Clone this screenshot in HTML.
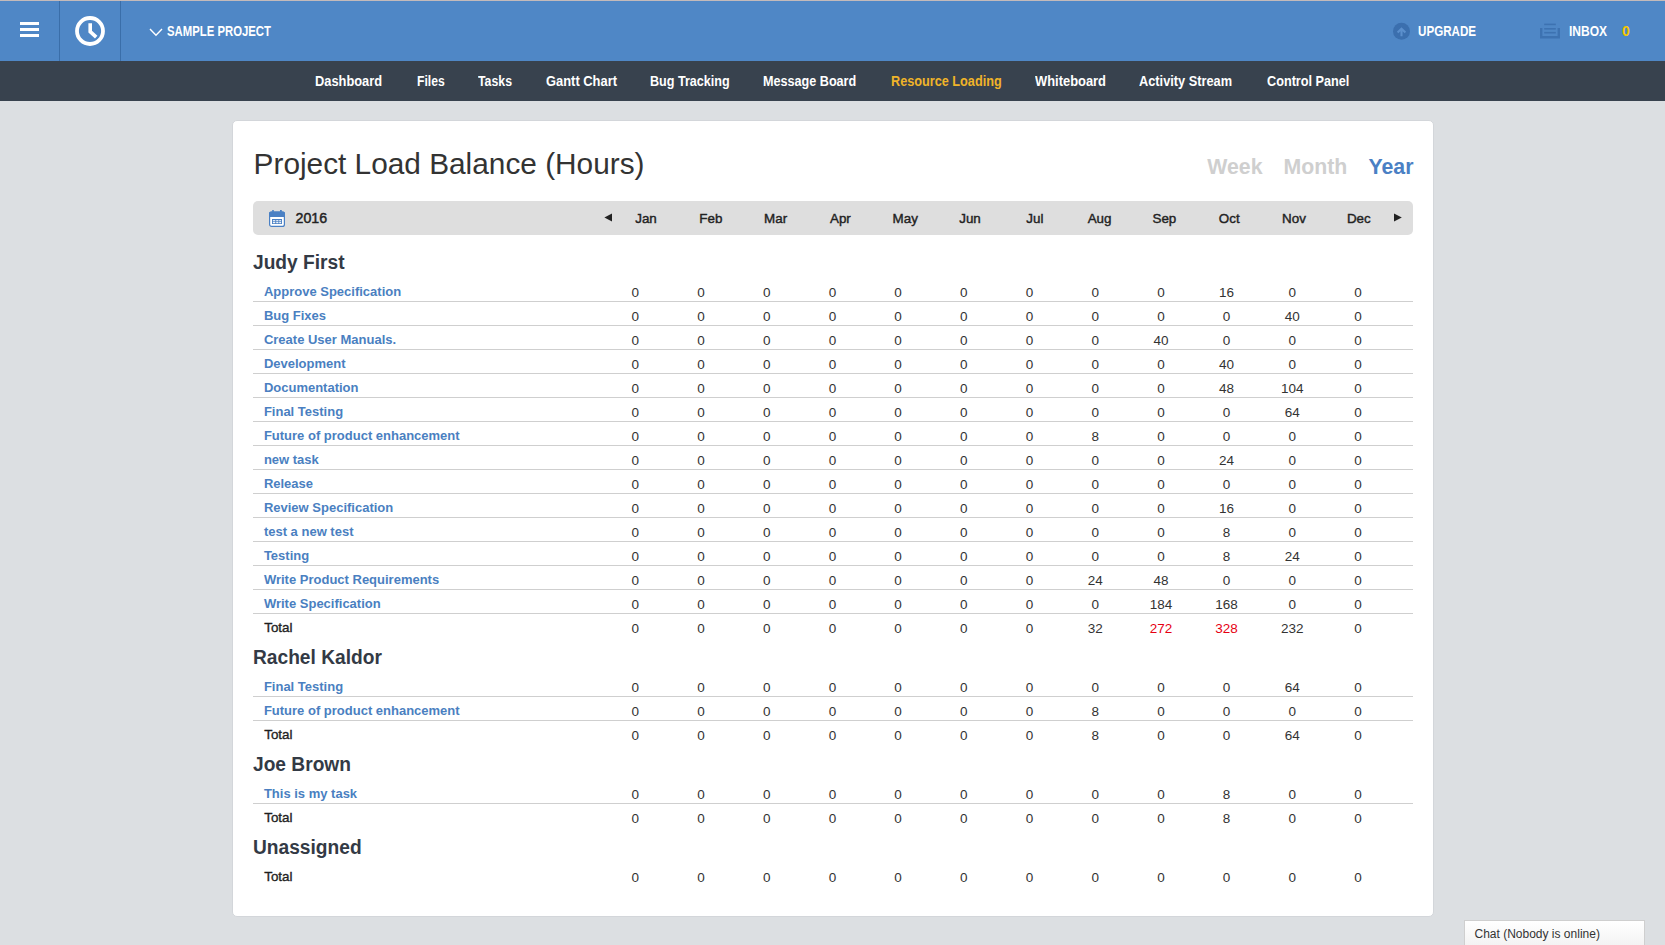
<!DOCTYPE html><html><head><meta charset="utf-8"><style>
html,body{margin:0;padding:0;}
body{width:1665px;height:945px;position:relative;overflow:hidden;background:#dcdfe2;font-family:"Liberation Sans",sans-serif;}
.t{position:absolute;white-space:nowrap;}
.abs{position:absolute;}
</style></head><body>
<div class="abs" style="left:0;top:0;width:1665px;height:1px;background:#c4baba"></div>
<div class="abs" style="left:0;top:1px;width:1665px;height:60px;background:#4f87c6"></div>
<div class="abs" style="left:59px;top:1px;width:1px;height:60px;background:#3a6ea9"></div>
<div class="abs" style="left:120px;top:1px;width:1px;height:60px;background:#3a6ea9"></div>
<div class="abs" style="left:20px;top:22px;width:19px;height:3px;background:#fff"></div>
<div class="abs" style="left:20px;top:28px;width:19px;height:3px;background:#fff"></div>
<div class="abs" style="left:20px;top:34px;width:19px;height:3px;background:#fff"></div>
<svg class="abs" style="left:70px;top:11px" width="40" height="40" viewBox="0 0 40 40"><circle cx="20" cy="20" r="13" fill="none" stroke="#fff" stroke-width="3.8"/><path d="M20.2 12.3 V20.6 L26.2 26.1" fill="none" stroke="#fff" stroke-width="3.6"/></svg>
<svg class="abs" style="left:147.6px;top:26px" width="16" height="12" viewBox="0 0 16 12"><path d="M2 3 L8 9.3 L14 3" fill="none" stroke="#fff" stroke-width="1.4"/></svg>
<div class="t" style="left:167.30px;top:24.15px;font-size:14px;line-height:14px;color:#fff;font-weight:bold;transform:scaleX(0.81);transform-origin:0 0;">SAMPLE PROJECT</div>
<svg class="abs" style="left:1392px;top:22px" width="19" height="19" viewBox="0 0 19 19"><circle cx="9.5" cy="9.3" r="8.5" fill="#3b6fae"/><path d="M9.5 14.2 V7.2 M5.6 10.6 L9.5 6.7 L13.4 10.6" fill="none" stroke="#5b8fcc" stroke-width="2.1"/></svg>
<div class="t" style="left:1418.30px;top:24.15px;font-size:14px;line-height:14px;color:#fff;font-weight:bold;transform:scaleX(0.83);transform-origin:0 0;">UPGRADE</div>
<svg class="abs" style="left:1540px;top:23px" width="20" height="16" viewBox="0 0 20 16"><path d="M1.2 5 V14.2 H18.8 V5" fill="none" stroke="#3d72b1" stroke-width="2.4"/><rect x="4.2" y="0.6" width="11.6" height="1.6" fill="#3d72b1"/><rect x="4.2" y="5" width="11.6" height="1.6" fill="#3d72b1"/><rect x="4.2" y="8.9" width="11.6" height="1.6" fill="#3d72b1"/></svg>
<div class="t" style="left:1569.00px;top:24.15px;font-size:14px;line-height:14px;color:#fff;font-weight:bold;transform:scaleX(0.86);transform-origin:0 0;">INBOX</div>
<div class="t" style="left:1622.00px;top:24.15px;font-size:14px;line-height:14px;color:#f7c600;font-weight:bold;">0</div>
<div class="abs" style="left:0;top:61px;width:1665px;height:40px;background:#38424e"></div>
<div class="t" style="left:315.30px;top:74.15px;font-size:14px;line-height:14px;color:#fff;font-weight:bold;transform:scaleX(0.917);transform-origin:0 0;">Dashboard</div>
<div class="t" style="left:416.70px;top:74.15px;font-size:14px;line-height:14px;color:#fff;font-weight:bold;transform:scaleX(0.868);transform-origin:0 0;">Files</div>
<div class="t" style="left:478.00px;top:74.15px;font-size:14px;line-height:14px;color:#fff;font-weight:bold;transform:scaleX(0.879);transform-origin:0 0;">Tasks</div>
<div class="t" style="left:545.90px;top:74.15px;font-size:14px;line-height:14px;color:#fff;font-weight:bold;transform:scaleX(0.922);transform-origin:0 0;">Gantt Chart</div>
<div class="t" style="left:650.00px;top:74.15px;font-size:14px;line-height:14px;color:#fff;font-weight:bold;transform:scaleX(0.899);transform-origin:0 0;">Bug Tracking</div>
<div class="t" style="left:763.40px;top:74.15px;font-size:14px;line-height:14px;color:#fff;font-weight:bold;transform:scaleX(0.901);transform-origin:0 0;">Message Board</div>
<div class="t" style="left:891.00px;top:74.15px;font-size:14px;line-height:14px;color:#f0b429;font-weight:bold;transform:scaleX(0.906);transform-origin:0 0;">Resource Loading</div>
<div class="t" style="left:1034.80px;top:74.15px;font-size:14px;line-height:14px;color:#fff;font-weight:bold;transform:scaleX(0.922);transform-origin:0 0;">Whiteboard</div>
<div class="t" style="left:1139.40px;top:74.15px;font-size:14px;line-height:14px;color:#fff;font-weight:bold;transform:scaleX(0.913);transform-origin:0 0;">Activity Stream</div>
<div class="t" style="left:1266.90px;top:74.15px;font-size:14px;line-height:14px;color:#fff;font-weight:bold;transform:scaleX(0.905);transform-origin:0 0;">Control Panel</div>
<div class="abs" style="left:232px;top:120px;width:1200px;height:795px;background:#fff;border:1px solid #d3d6da;border-radius:5px"></div>
<div class="t" style="left:253.60px;top:149.47px;font-size:29.8px;line-height:29.8px;color:#333;font-weight:normal;">Project Load Balance (Hours)</div>
<div class="t" style="left:1207.30px;top:157.37px;font-size:21.3px;line-height:21.3px;color:#cfcfcf;font-weight:bold;">Week</div>
<div class="t" style="left:1283.50px;top:157.37px;font-size:21.3px;line-height:21.3px;color:#cfcfcf;font-weight:bold;">Month</div>
<div class="t" style="left:1368.50px;top:157.37px;font-size:21.3px;line-height:21.3px;color:#4a80c4;font-weight:bold;">Year</div>
<div class="abs" style="left:253px;top:201px;width:1160px;height:34px;background:#dedede;border-radius:5px"></div>
<svg class="abs" style="left:269px;top:210px" width="16" height="17" viewBox="0 0 16 17"><rect x="0.6" y="2.1" width="14.8" height="14.3" rx="2" fill="#fff" stroke="#4a80c4" stroke-width="1.2"/><path d="M0 4.1 a2 2 0 0 1 2 -2.6 h12 a2 2 0 0 1 2 2.6 v3 h-16 z" fill="#4a80c4"/><rect x="3.2" y="0" width="1.6" height="2.6" fill="#4a80c4"/><rect x="11" y="0" width="1.8" height="2.6" fill="#4a80c4"/><rect x="3" y="9" width="10" height="5" fill="#4a80c4"/><rect x="3.9" y="10.2" width="2.4" height="1.1" fill="#fff"/><rect x="7.2" y="10.2" width="2.2" height="1.1" fill="#fff"/><rect x="10.2" y="10.2" width="1.9" height="1.1" fill="#fff"/><rect x="3.9" y="12.1" width="2.4" height="1.1" fill="#fff"/><rect x="7.2" y="12.1" width="2.2" height="1.1" fill="#fff"/><rect x="10.2" y="12.1" width="1.9" height="1.1" fill="#fff"/></svg>
<div class="t" style="left:295.50px;top:211.28px;font-size:14.2px;line-height:14.2px;color:#222;font-weight:normal;-webkit-text-stroke:0.45px #222;">2016</div>
<svg class="abs" style="left:603px;top:212px" width="10" height="11" viewBox="0 0 10 11"><path d="M1.4 5.5 L9 1.5 V9.5 Z" fill="#222"/></svg>
<svg class="abs" style="left:1393px;top:212px" width="10" height="11" viewBox="0 0 10 11"><path d="M8.8 5.5 L1 1.5 V9.5 Z" fill="#222"/></svg>
<div class="t" style="left:546.00px;width:200px;text-align:center;top:212.16px;font-size:13.4px;line-height:13.4px;color:#222;font-weight:normal;-webkit-text-stroke:0.4px #222;">Jan</div>
<div class="t" style="left:610.80px;width:200px;text-align:center;top:212.16px;font-size:13.4px;line-height:13.4px;color:#222;font-weight:normal;-webkit-text-stroke:0.4px #222;">Feb</div>
<div class="t" style="left:675.60px;width:200px;text-align:center;top:212.16px;font-size:13.4px;line-height:13.4px;color:#222;font-weight:normal;-webkit-text-stroke:0.4px #222;">Mar</div>
<div class="t" style="left:740.40px;width:200px;text-align:center;top:212.16px;font-size:13.4px;line-height:13.4px;color:#222;font-weight:normal;-webkit-text-stroke:0.4px #222;">Apr</div>
<div class="t" style="left:805.20px;width:200px;text-align:center;top:212.16px;font-size:13.4px;line-height:13.4px;color:#222;font-weight:normal;-webkit-text-stroke:0.4px #222;">May</div>
<div class="t" style="left:870.00px;width:200px;text-align:center;top:212.16px;font-size:13.4px;line-height:13.4px;color:#222;font-weight:normal;-webkit-text-stroke:0.4px #222;">Jun</div>
<div class="t" style="left:934.80px;width:200px;text-align:center;top:212.16px;font-size:13.4px;line-height:13.4px;color:#222;font-weight:normal;-webkit-text-stroke:0.4px #222;">Jul</div>
<div class="t" style="left:999.60px;width:200px;text-align:center;top:212.16px;font-size:13.4px;line-height:13.4px;color:#222;font-weight:normal;-webkit-text-stroke:0.4px #222;">Aug</div>
<div class="t" style="left:1064.40px;width:200px;text-align:center;top:212.16px;font-size:13.4px;line-height:13.4px;color:#222;font-weight:normal;-webkit-text-stroke:0.4px #222;">Sep</div>
<div class="t" style="left:1129.20px;width:200px;text-align:center;top:212.16px;font-size:13.4px;line-height:13.4px;color:#222;font-weight:normal;-webkit-text-stroke:0.4px #222;">Oct</div>
<div class="t" style="left:1194.00px;width:200px;text-align:center;top:212.16px;font-size:13.4px;line-height:13.4px;color:#222;font-weight:normal;-webkit-text-stroke:0.4px #222;">Nov</div>
<div class="t" style="left:1258.80px;width:200px;text-align:center;top:212.16px;font-size:13.4px;line-height:13.4px;color:#222;font-weight:normal;-webkit-text-stroke:0.4px #222;">Dec</div>
<div class="t" style="left:252.80px;top:252.07px;font-size:20px;line-height:20px;color:#333a45;font-weight:bold;transform:scaleX(0.958);transform-origin:0 0;">Judy First</div>
<div class="t" style="left:263.90px;top:285.40px;font-size:13px;line-height:13px;color:#4a7fc1;font-weight:bold;">Approve Specification</div>
<div class="t" style="left:535.30px;width:200px;text-align:center;top:285.77px;font-size:13.5px;line-height:13.5px;color:#333;font-weight:normal;">0</div>
<div class="t" style="left:601.00px;width:200px;text-align:center;top:285.77px;font-size:13.5px;line-height:13.5px;color:#333;font-weight:normal;">0</div>
<div class="t" style="left:666.70px;width:200px;text-align:center;top:285.77px;font-size:13.5px;line-height:13.5px;color:#333;font-weight:normal;">0</div>
<div class="t" style="left:732.40px;width:200px;text-align:center;top:285.77px;font-size:13.5px;line-height:13.5px;color:#333;font-weight:normal;">0</div>
<div class="t" style="left:798.10px;width:200px;text-align:center;top:285.77px;font-size:13.5px;line-height:13.5px;color:#333;font-weight:normal;">0</div>
<div class="t" style="left:863.80px;width:200px;text-align:center;top:285.77px;font-size:13.5px;line-height:13.5px;color:#333;font-weight:normal;">0</div>
<div class="t" style="left:929.50px;width:200px;text-align:center;top:285.77px;font-size:13.5px;line-height:13.5px;color:#333;font-weight:normal;">0</div>
<div class="t" style="left:995.20px;width:200px;text-align:center;top:285.77px;font-size:13.5px;line-height:13.5px;color:#333;font-weight:normal;">0</div>
<div class="t" style="left:1060.90px;width:200px;text-align:center;top:285.77px;font-size:13.5px;line-height:13.5px;color:#333;font-weight:normal;">0</div>
<div class="t" style="left:1126.60px;width:200px;text-align:center;top:285.77px;font-size:13.5px;line-height:13.5px;color:#333;font-weight:normal;">16</div>
<div class="t" style="left:1192.30px;width:200px;text-align:center;top:285.77px;font-size:13.5px;line-height:13.5px;color:#333;font-weight:normal;">0</div>
<div class="t" style="left:1258.00px;width:200px;text-align:center;top:285.77px;font-size:13.5px;line-height:13.5px;color:#333;font-weight:normal;">0</div>
<div class="abs" style="left:253px;top:301px;width:1160px;height:1px;background:#cfcfcf"></div>
<div class="t" style="left:263.90px;top:309.40px;font-size:13px;line-height:13px;color:#4a7fc1;font-weight:bold;">Bug Fixes</div>
<div class="t" style="left:535.30px;width:200px;text-align:center;top:309.77px;font-size:13.5px;line-height:13.5px;color:#333;font-weight:normal;">0</div>
<div class="t" style="left:601.00px;width:200px;text-align:center;top:309.77px;font-size:13.5px;line-height:13.5px;color:#333;font-weight:normal;">0</div>
<div class="t" style="left:666.70px;width:200px;text-align:center;top:309.77px;font-size:13.5px;line-height:13.5px;color:#333;font-weight:normal;">0</div>
<div class="t" style="left:732.40px;width:200px;text-align:center;top:309.77px;font-size:13.5px;line-height:13.5px;color:#333;font-weight:normal;">0</div>
<div class="t" style="left:798.10px;width:200px;text-align:center;top:309.77px;font-size:13.5px;line-height:13.5px;color:#333;font-weight:normal;">0</div>
<div class="t" style="left:863.80px;width:200px;text-align:center;top:309.77px;font-size:13.5px;line-height:13.5px;color:#333;font-weight:normal;">0</div>
<div class="t" style="left:929.50px;width:200px;text-align:center;top:309.77px;font-size:13.5px;line-height:13.5px;color:#333;font-weight:normal;">0</div>
<div class="t" style="left:995.20px;width:200px;text-align:center;top:309.77px;font-size:13.5px;line-height:13.5px;color:#333;font-weight:normal;">0</div>
<div class="t" style="left:1060.90px;width:200px;text-align:center;top:309.77px;font-size:13.5px;line-height:13.5px;color:#333;font-weight:normal;">0</div>
<div class="t" style="left:1126.60px;width:200px;text-align:center;top:309.77px;font-size:13.5px;line-height:13.5px;color:#333;font-weight:normal;">0</div>
<div class="t" style="left:1192.30px;width:200px;text-align:center;top:309.77px;font-size:13.5px;line-height:13.5px;color:#333;font-weight:normal;">40</div>
<div class="t" style="left:1258.00px;width:200px;text-align:center;top:309.77px;font-size:13.5px;line-height:13.5px;color:#333;font-weight:normal;">0</div>
<div class="abs" style="left:253px;top:325px;width:1160px;height:1px;background:#cfcfcf"></div>
<div class="t" style="left:263.90px;top:333.40px;font-size:13px;line-height:13px;color:#4a7fc1;font-weight:bold;">Create User Manuals.</div>
<div class="t" style="left:535.30px;width:200px;text-align:center;top:333.77px;font-size:13.5px;line-height:13.5px;color:#333;font-weight:normal;">0</div>
<div class="t" style="left:601.00px;width:200px;text-align:center;top:333.77px;font-size:13.5px;line-height:13.5px;color:#333;font-weight:normal;">0</div>
<div class="t" style="left:666.70px;width:200px;text-align:center;top:333.77px;font-size:13.5px;line-height:13.5px;color:#333;font-weight:normal;">0</div>
<div class="t" style="left:732.40px;width:200px;text-align:center;top:333.77px;font-size:13.5px;line-height:13.5px;color:#333;font-weight:normal;">0</div>
<div class="t" style="left:798.10px;width:200px;text-align:center;top:333.77px;font-size:13.5px;line-height:13.5px;color:#333;font-weight:normal;">0</div>
<div class="t" style="left:863.80px;width:200px;text-align:center;top:333.77px;font-size:13.5px;line-height:13.5px;color:#333;font-weight:normal;">0</div>
<div class="t" style="left:929.50px;width:200px;text-align:center;top:333.77px;font-size:13.5px;line-height:13.5px;color:#333;font-weight:normal;">0</div>
<div class="t" style="left:995.20px;width:200px;text-align:center;top:333.77px;font-size:13.5px;line-height:13.5px;color:#333;font-weight:normal;">0</div>
<div class="t" style="left:1060.90px;width:200px;text-align:center;top:333.77px;font-size:13.5px;line-height:13.5px;color:#333;font-weight:normal;">40</div>
<div class="t" style="left:1126.60px;width:200px;text-align:center;top:333.77px;font-size:13.5px;line-height:13.5px;color:#333;font-weight:normal;">0</div>
<div class="t" style="left:1192.30px;width:200px;text-align:center;top:333.77px;font-size:13.5px;line-height:13.5px;color:#333;font-weight:normal;">0</div>
<div class="t" style="left:1258.00px;width:200px;text-align:center;top:333.77px;font-size:13.5px;line-height:13.5px;color:#333;font-weight:normal;">0</div>
<div class="abs" style="left:253px;top:349px;width:1160px;height:1px;background:#cfcfcf"></div>
<div class="t" style="left:263.90px;top:357.40px;font-size:13px;line-height:13px;color:#4a7fc1;font-weight:bold;">Development</div>
<div class="t" style="left:535.30px;width:200px;text-align:center;top:357.77px;font-size:13.5px;line-height:13.5px;color:#333;font-weight:normal;">0</div>
<div class="t" style="left:601.00px;width:200px;text-align:center;top:357.77px;font-size:13.5px;line-height:13.5px;color:#333;font-weight:normal;">0</div>
<div class="t" style="left:666.70px;width:200px;text-align:center;top:357.77px;font-size:13.5px;line-height:13.5px;color:#333;font-weight:normal;">0</div>
<div class="t" style="left:732.40px;width:200px;text-align:center;top:357.77px;font-size:13.5px;line-height:13.5px;color:#333;font-weight:normal;">0</div>
<div class="t" style="left:798.10px;width:200px;text-align:center;top:357.77px;font-size:13.5px;line-height:13.5px;color:#333;font-weight:normal;">0</div>
<div class="t" style="left:863.80px;width:200px;text-align:center;top:357.77px;font-size:13.5px;line-height:13.5px;color:#333;font-weight:normal;">0</div>
<div class="t" style="left:929.50px;width:200px;text-align:center;top:357.77px;font-size:13.5px;line-height:13.5px;color:#333;font-weight:normal;">0</div>
<div class="t" style="left:995.20px;width:200px;text-align:center;top:357.77px;font-size:13.5px;line-height:13.5px;color:#333;font-weight:normal;">0</div>
<div class="t" style="left:1060.90px;width:200px;text-align:center;top:357.77px;font-size:13.5px;line-height:13.5px;color:#333;font-weight:normal;">0</div>
<div class="t" style="left:1126.60px;width:200px;text-align:center;top:357.77px;font-size:13.5px;line-height:13.5px;color:#333;font-weight:normal;">40</div>
<div class="t" style="left:1192.30px;width:200px;text-align:center;top:357.77px;font-size:13.5px;line-height:13.5px;color:#333;font-weight:normal;">0</div>
<div class="t" style="left:1258.00px;width:200px;text-align:center;top:357.77px;font-size:13.5px;line-height:13.5px;color:#333;font-weight:normal;">0</div>
<div class="abs" style="left:253px;top:373px;width:1160px;height:1px;background:#cfcfcf"></div>
<div class="t" style="left:263.90px;top:381.40px;font-size:13px;line-height:13px;color:#4a7fc1;font-weight:bold;">Documentation</div>
<div class="t" style="left:535.30px;width:200px;text-align:center;top:381.77px;font-size:13.5px;line-height:13.5px;color:#333;font-weight:normal;">0</div>
<div class="t" style="left:601.00px;width:200px;text-align:center;top:381.77px;font-size:13.5px;line-height:13.5px;color:#333;font-weight:normal;">0</div>
<div class="t" style="left:666.70px;width:200px;text-align:center;top:381.77px;font-size:13.5px;line-height:13.5px;color:#333;font-weight:normal;">0</div>
<div class="t" style="left:732.40px;width:200px;text-align:center;top:381.77px;font-size:13.5px;line-height:13.5px;color:#333;font-weight:normal;">0</div>
<div class="t" style="left:798.10px;width:200px;text-align:center;top:381.77px;font-size:13.5px;line-height:13.5px;color:#333;font-weight:normal;">0</div>
<div class="t" style="left:863.80px;width:200px;text-align:center;top:381.77px;font-size:13.5px;line-height:13.5px;color:#333;font-weight:normal;">0</div>
<div class="t" style="left:929.50px;width:200px;text-align:center;top:381.77px;font-size:13.5px;line-height:13.5px;color:#333;font-weight:normal;">0</div>
<div class="t" style="left:995.20px;width:200px;text-align:center;top:381.77px;font-size:13.5px;line-height:13.5px;color:#333;font-weight:normal;">0</div>
<div class="t" style="left:1060.90px;width:200px;text-align:center;top:381.77px;font-size:13.5px;line-height:13.5px;color:#333;font-weight:normal;">0</div>
<div class="t" style="left:1126.60px;width:200px;text-align:center;top:381.77px;font-size:13.5px;line-height:13.5px;color:#333;font-weight:normal;">48</div>
<div class="t" style="left:1192.30px;width:200px;text-align:center;top:381.77px;font-size:13.5px;line-height:13.5px;color:#333;font-weight:normal;">104</div>
<div class="t" style="left:1258.00px;width:200px;text-align:center;top:381.77px;font-size:13.5px;line-height:13.5px;color:#333;font-weight:normal;">0</div>
<div class="abs" style="left:253px;top:397px;width:1160px;height:1px;background:#cfcfcf"></div>
<div class="t" style="left:263.90px;top:405.40px;font-size:13px;line-height:13px;color:#4a7fc1;font-weight:bold;">Final Testing</div>
<div class="t" style="left:535.30px;width:200px;text-align:center;top:405.77px;font-size:13.5px;line-height:13.5px;color:#333;font-weight:normal;">0</div>
<div class="t" style="left:601.00px;width:200px;text-align:center;top:405.77px;font-size:13.5px;line-height:13.5px;color:#333;font-weight:normal;">0</div>
<div class="t" style="left:666.70px;width:200px;text-align:center;top:405.77px;font-size:13.5px;line-height:13.5px;color:#333;font-weight:normal;">0</div>
<div class="t" style="left:732.40px;width:200px;text-align:center;top:405.77px;font-size:13.5px;line-height:13.5px;color:#333;font-weight:normal;">0</div>
<div class="t" style="left:798.10px;width:200px;text-align:center;top:405.77px;font-size:13.5px;line-height:13.5px;color:#333;font-weight:normal;">0</div>
<div class="t" style="left:863.80px;width:200px;text-align:center;top:405.77px;font-size:13.5px;line-height:13.5px;color:#333;font-weight:normal;">0</div>
<div class="t" style="left:929.50px;width:200px;text-align:center;top:405.77px;font-size:13.5px;line-height:13.5px;color:#333;font-weight:normal;">0</div>
<div class="t" style="left:995.20px;width:200px;text-align:center;top:405.77px;font-size:13.5px;line-height:13.5px;color:#333;font-weight:normal;">0</div>
<div class="t" style="left:1060.90px;width:200px;text-align:center;top:405.77px;font-size:13.5px;line-height:13.5px;color:#333;font-weight:normal;">0</div>
<div class="t" style="left:1126.60px;width:200px;text-align:center;top:405.77px;font-size:13.5px;line-height:13.5px;color:#333;font-weight:normal;">0</div>
<div class="t" style="left:1192.30px;width:200px;text-align:center;top:405.77px;font-size:13.5px;line-height:13.5px;color:#333;font-weight:normal;">64</div>
<div class="t" style="left:1258.00px;width:200px;text-align:center;top:405.77px;font-size:13.5px;line-height:13.5px;color:#333;font-weight:normal;">0</div>
<div class="abs" style="left:253px;top:421px;width:1160px;height:1px;background:#cfcfcf"></div>
<div class="t" style="left:263.90px;top:429.40px;font-size:13px;line-height:13px;color:#4a7fc1;font-weight:bold;">Future of product enhancement</div>
<div class="t" style="left:535.30px;width:200px;text-align:center;top:429.77px;font-size:13.5px;line-height:13.5px;color:#333;font-weight:normal;">0</div>
<div class="t" style="left:601.00px;width:200px;text-align:center;top:429.77px;font-size:13.5px;line-height:13.5px;color:#333;font-weight:normal;">0</div>
<div class="t" style="left:666.70px;width:200px;text-align:center;top:429.77px;font-size:13.5px;line-height:13.5px;color:#333;font-weight:normal;">0</div>
<div class="t" style="left:732.40px;width:200px;text-align:center;top:429.77px;font-size:13.5px;line-height:13.5px;color:#333;font-weight:normal;">0</div>
<div class="t" style="left:798.10px;width:200px;text-align:center;top:429.77px;font-size:13.5px;line-height:13.5px;color:#333;font-weight:normal;">0</div>
<div class="t" style="left:863.80px;width:200px;text-align:center;top:429.77px;font-size:13.5px;line-height:13.5px;color:#333;font-weight:normal;">0</div>
<div class="t" style="left:929.50px;width:200px;text-align:center;top:429.77px;font-size:13.5px;line-height:13.5px;color:#333;font-weight:normal;">0</div>
<div class="t" style="left:995.20px;width:200px;text-align:center;top:429.77px;font-size:13.5px;line-height:13.5px;color:#333;font-weight:normal;">8</div>
<div class="t" style="left:1060.90px;width:200px;text-align:center;top:429.77px;font-size:13.5px;line-height:13.5px;color:#333;font-weight:normal;">0</div>
<div class="t" style="left:1126.60px;width:200px;text-align:center;top:429.77px;font-size:13.5px;line-height:13.5px;color:#333;font-weight:normal;">0</div>
<div class="t" style="left:1192.30px;width:200px;text-align:center;top:429.77px;font-size:13.5px;line-height:13.5px;color:#333;font-weight:normal;">0</div>
<div class="t" style="left:1258.00px;width:200px;text-align:center;top:429.77px;font-size:13.5px;line-height:13.5px;color:#333;font-weight:normal;">0</div>
<div class="abs" style="left:253px;top:445px;width:1160px;height:1px;background:#cfcfcf"></div>
<div class="t" style="left:263.90px;top:453.40px;font-size:13px;line-height:13px;color:#4a7fc1;font-weight:bold;">new task</div>
<div class="t" style="left:535.30px;width:200px;text-align:center;top:453.77px;font-size:13.5px;line-height:13.5px;color:#333;font-weight:normal;">0</div>
<div class="t" style="left:601.00px;width:200px;text-align:center;top:453.77px;font-size:13.5px;line-height:13.5px;color:#333;font-weight:normal;">0</div>
<div class="t" style="left:666.70px;width:200px;text-align:center;top:453.77px;font-size:13.5px;line-height:13.5px;color:#333;font-weight:normal;">0</div>
<div class="t" style="left:732.40px;width:200px;text-align:center;top:453.77px;font-size:13.5px;line-height:13.5px;color:#333;font-weight:normal;">0</div>
<div class="t" style="left:798.10px;width:200px;text-align:center;top:453.77px;font-size:13.5px;line-height:13.5px;color:#333;font-weight:normal;">0</div>
<div class="t" style="left:863.80px;width:200px;text-align:center;top:453.77px;font-size:13.5px;line-height:13.5px;color:#333;font-weight:normal;">0</div>
<div class="t" style="left:929.50px;width:200px;text-align:center;top:453.77px;font-size:13.5px;line-height:13.5px;color:#333;font-weight:normal;">0</div>
<div class="t" style="left:995.20px;width:200px;text-align:center;top:453.77px;font-size:13.5px;line-height:13.5px;color:#333;font-weight:normal;">0</div>
<div class="t" style="left:1060.90px;width:200px;text-align:center;top:453.77px;font-size:13.5px;line-height:13.5px;color:#333;font-weight:normal;">0</div>
<div class="t" style="left:1126.60px;width:200px;text-align:center;top:453.77px;font-size:13.5px;line-height:13.5px;color:#333;font-weight:normal;">24</div>
<div class="t" style="left:1192.30px;width:200px;text-align:center;top:453.77px;font-size:13.5px;line-height:13.5px;color:#333;font-weight:normal;">0</div>
<div class="t" style="left:1258.00px;width:200px;text-align:center;top:453.77px;font-size:13.5px;line-height:13.5px;color:#333;font-weight:normal;">0</div>
<div class="abs" style="left:253px;top:469px;width:1160px;height:1px;background:#cfcfcf"></div>
<div class="t" style="left:263.90px;top:477.40px;font-size:13px;line-height:13px;color:#4a7fc1;font-weight:bold;">Release</div>
<div class="t" style="left:535.30px;width:200px;text-align:center;top:477.77px;font-size:13.5px;line-height:13.5px;color:#333;font-weight:normal;">0</div>
<div class="t" style="left:601.00px;width:200px;text-align:center;top:477.77px;font-size:13.5px;line-height:13.5px;color:#333;font-weight:normal;">0</div>
<div class="t" style="left:666.70px;width:200px;text-align:center;top:477.77px;font-size:13.5px;line-height:13.5px;color:#333;font-weight:normal;">0</div>
<div class="t" style="left:732.40px;width:200px;text-align:center;top:477.77px;font-size:13.5px;line-height:13.5px;color:#333;font-weight:normal;">0</div>
<div class="t" style="left:798.10px;width:200px;text-align:center;top:477.77px;font-size:13.5px;line-height:13.5px;color:#333;font-weight:normal;">0</div>
<div class="t" style="left:863.80px;width:200px;text-align:center;top:477.77px;font-size:13.5px;line-height:13.5px;color:#333;font-weight:normal;">0</div>
<div class="t" style="left:929.50px;width:200px;text-align:center;top:477.77px;font-size:13.5px;line-height:13.5px;color:#333;font-weight:normal;">0</div>
<div class="t" style="left:995.20px;width:200px;text-align:center;top:477.77px;font-size:13.5px;line-height:13.5px;color:#333;font-weight:normal;">0</div>
<div class="t" style="left:1060.90px;width:200px;text-align:center;top:477.77px;font-size:13.5px;line-height:13.5px;color:#333;font-weight:normal;">0</div>
<div class="t" style="left:1126.60px;width:200px;text-align:center;top:477.77px;font-size:13.5px;line-height:13.5px;color:#333;font-weight:normal;">0</div>
<div class="t" style="left:1192.30px;width:200px;text-align:center;top:477.77px;font-size:13.5px;line-height:13.5px;color:#333;font-weight:normal;">0</div>
<div class="t" style="left:1258.00px;width:200px;text-align:center;top:477.77px;font-size:13.5px;line-height:13.5px;color:#333;font-weight:normal;">0</div>
<div class="abs" style="left:253px;top:493px;width:1160px;height:1px;background:#cfcfcf"></div>
<div class="t" style="left:263.90px;top:501.40px;font-size:13px;line-height:13px;color:#4a7fc1;font-weight:bold;">Review Specification</div>
<div class="t" style="left:535.30px;width:200px;text-align:center;top:501.77px;font-size:13.5px;line-height:13.5px;color:#333;font-weight:normal;">0</div>
<div class="t" style="left:601.00px;width:200px;text-align:center;top:501.77px;font-size:13.5px;line-height:13.5px;color:#333;font-weight:normal;">0</div>
<div class="t" style="left:666.70px;width:200px;text-align:center;top:501.77px;font-size:13.5px;line-height:13.5px;color:#333;font-weight:normal;">0</div>
<div class="t" style="left:732.40px;width:200px;text-align:center;top:501.77px;font-size:13.5px;line-height:13.5px;color:#333;font-weight:normal;">0</div>
<div class="t" style="left:798.10px;width:200px;text-align:center;top:501.77px;font-size:13.5px;line-height:13.5px;color:#333;font-weight:normal;">0</div>
<div class="t" style="left:863.80px;width:200px;text-align:center;top:501.77px;font-size:13.5px;line-height:13.5px;color:#333;font-weight:normal;">0</div>
<div class="t" style="left:929.50px;width:200px;text-align:center;top:501.77px;font-size:13.5px;line-height:13.5px;color:#333;font-weight:normal;">0</div>
<div class="t" style="left:995.20px;width:200px;text-align:center;top:501.77px;font-size:13.5px;line-height:13.5px;color:#333;font-weight:normal;">0</div>
<div class="t" style="left:1060.90px;width:200px;text-align:center;top:501.77px;font-size:13.5px;line-height:13.5px;color:#333;font-weight:normal;">0</div>
<div class="t" style="left:1126.60px;width:200px;text-align:center;top:501.77px;font-size:13.5px;line-height:13.5px;color:#333;font-weight:normal;">16</div>
<div class="t" style="left:1192.30px;width:200px;text-align:center;top:501.77px;font-size:13.5px;line-height:13.5px;color:#333;font-weight:normal;">0</div>
<div class="t" style="left:1258.00px;width:200px;text-align:center;top:501.77px;font-size:13.5px;line-height:13.5px;color:#333;font-weight:normal;">0</div>
<div class="abs" style="left:253px;top:517px;width:1160px;height:1px;background:#cfcfcf"></div>
<div class="t" style="left:263.90px;top:525.40px;font-size:13px;line-height:13px;color:#4a7fc1;font-weight:bold;">test a new test</div>
<div class="t" style="left:535.30px;width:200px;text-align:center;top:525.77px;font-size:13.5px;line-height:13.5px;color:#333;font-weight:normal;">0</div>
<div class="t" style="left:601.00px;width:200px;text-align:center;top:525.77px;font-size:13.5px;line-height:13.5px;color:#333;font-weight:normal;">0</div>
<div class="t" style="left:666.70px;width:200px;text-align:center;top:525.77px;font-size:13.5px;line-height:13.5px;color:#333;font-weight:normal;">0</div>
<div class="t" style="left:732.40px;width:200px;text-align:center;top:525.77px;font-size:13.5px;line-height:13.5px;color:#333;font-weight:normal;">0</div>
<div class="t" style="left:798.10px;width:200px;text-align:center;top:525.77px;font-size:13.5px;line-height:13.5px;color:#333;font-weight:normal;">0</div>
<div class="t" style="left:863.80px;width:200px;text-align:center;top:525.77px;font-size:13.5px;line-height:13.5px;color:#333;font-weight:normal;">0</div>
<div class="t" style="left:929.50px;width:200px;text-align:center;top:525.77px;font-size:13.5px;line-height:13.5px;color:#333;font-weight:normal;">0</div>
<div class="t" style="left:995.20px;width:200px;text-align:center;top:525.77px;font-size:13.5px;line-height:13.5px;color:#333;font-weight:normal;">0</div>
<div class="t" style="left:1060.90px;width:200px;text-align:center;top:525.77px;font-size:13.5px;line-height:13.5px;color:#333;font-weight:normal;">0</div>
<div class="t" style="left:1126.60px;width:200px;text-align:center;top:525.77px;font-size:13.5px;line-height:13.5px;color:#333;font-weight:normal;">8</div>
<div class="t" style="left:1192.30px;width:200px;text-align:center;top:525.77px;font-size:13.5px;line-height:13.5px;color:#333;font-weight:normal;">0</div>
<div class="t" style="left:1258.00px;width:200px;text-align:center;top:525.77px;font-size:13.5px;line-height:13.5px;color:#333;font-weight:normal;">0</div>
<div class="abs" style="left:253px;top:541px;width:1160px;height:1px;background:#cfcfcf"></div>
<div class="t" style="left:263.90px;top:549.40px;font-size:13px;line-height:13px;color:#4a7fc1;font-weight:bold;">Testing</div>
<div class="t" style="left:535.30px;width:200px;text-align:center;top:549.77px;font-size:13.5px;line-height:13.5px;color:#333;font-weight:normal;">0</div>
<div class="t" style="left:601.00px;width:200px;text-align:center;top:549.77px;font-size:13.5px;line-height:13.5px;color:#333;font-weight:normal;">0</div>
<div class="t" style="left:666.70px;width:200px;text-align:center;top:549.77px;font-size:13.5px;line-height:13.5px;color:#333;font-weight:normal;">0</div>
<div class="t" style="left:732.40px;width:200px;text-align:center;top:549.77px;font-size:13.5px;line-height:13.5px;color:#333;font-weight:normal;">0</div>
<div class="t" style="left:798.10px;width:200px;text-align:center;top:549.77px;font-size:13.5px;line-height:13.5px;color:#333;font-weight:normal;">0</div>
<div class="t" style="left:863.80px;width:200px;text-align:center;top:549.77px;font-size:13.5px;line-height:13.5px;color:#333;font-weight:normal;">0</div>
<div class="t" style="left:929.50px;width:200px;text-align:center;top:549.77px;font-size:13.5px;line-height:13.5px;color:#333;font-weight:normal;">0</div>
<div class="t" style="left:995.20px;width:200px;text-align:center;top:549.77px;font-size:13.5px;line-height:13.5px;color:#333;font-weight:normal;">0</div>
<div class="t" style="left:1060.90px;width:200px;text-align:center;top:549.77px;font-size:13.5px;line-height:13.5px;color:#333;font-weight:normal;">0</div>
<div class="t" style="left:1126.60px;width:200px;text-align:center;top:549.77px;font-size:13.5px;line-height:13.5px;color:#333;font-weight:normal;">8</div>
<div class="t" style="left:1192.30px;width:200px;text-align:center;top:549.77px;font-size:13.5px;line-height:13.5px;color:#333;font-weight:normal;">24</div>
<div class="t" style="left:1258.00px;width:200px;text-align:center;top:549.77px;font-size:13.5px;line-height:13.5px;color:#333;font-weight:normal;">0</div>
<div class="abs" style="left:253px;top:565px;width:1160px;height:1px;background:#cfcfcf"></div>
<div class="t" style="left:263.90px;top:573.40px;font-size:13px;line-height:13px;color:#4a7fc1;font-weight:bold;">Write Product Requirements</div>
<div class="t" style="left:535.30px;width:200px;text-align:center;top:573.77px;font-size:13.5px;line-height:13.5px;color:#333;font-weight:normal;">0</div>
<div class="t" style="left:601.00px;width:200px;text-align:center;top:573.77px;font-size:13.5px;line-height:13.5px;color:#333;font-weight:normal;">0</div>
<div class="t" style="left:666.70px;width:200px;text-align:center;top:573.77px;font-size:13.5px;line-height:13.5px;color:#333;font-weight:normal;">0</div>
<div class="t" style="left:732.40px;width:200px;text-align:center;top:573.77px;font-size:13.5px;line-height:13.5px;color:#333;font-weight:normal;">0</div>
<div class="t" style="left:798.10px;width:200px;text-align:center;top:573.77px;font-size:13.5px;line-height:13.5px;color:#333;font-weight:normal;">0</div>
<div class="t" style="left:863.80px;width:200px;text-align:center;top:573.77px;font-size:13.5px;line-height:13.5px;color:#333;font-weight:normal;">0</div>
<div class="t" style="left:929.50px;width:200px;text-align:center;top:573.77px;font-size:13.5px;line-height:13.5px;color:#333;font-weight:normal;">0</div>
<div class="t" style="left:995.20px;width:200px;text-align:center;top:573.77px;font-size:13.5px;line-height:13.5px;color:#333;font-weight:normal;">24</div>
<div class="t" style="left:1060.90px;width:200px;text-align:center;top:573.77px;font-size:13.5px;line-height:13.5px;color:#333;font-weight:normal;">48</div>
<div class="t" style="left:1126.60px;width:200px;text-align:center;top:573.77px;font-size:13.5px;line-height:13.5px;color:#333;font-weight:normal;">0</div>
<div class="t" style="left:1192.30px;width:200px;text-align:center;top:573.77px;font-size:13.5px;line-height:13.5px;color:#333;font-weight:normal;">0</div>
<div class="t" style="left:1258.00px;width:200px;text-align:center;top:573.77px;font-size:13.5px;line-height:13.5px;color:#333;font-weight:normal;">0</div>
<div class="abs" style="left:253px;top:589px;width:1160px;height:1px;background:#cfcfcf"></div>
<div class="t" style="left:263.90px;top:597.40px;font-size:13px;line-height:13px;color:#4a7fc1;font-weight:bold;">Write Specification</div>
<div class="t" style="left:535.30px;width:200px;text-align:center;top:597.77px;font-size:13.5px;line-height:13.5px;color:#333;font-weight:normal;">0</div>
<div class="t" style="left:601.00px;width:200px;text-align:center;top:597.77px;font-size:13.5px;line-height:13.5px;color:#333;font-weight:normal;">0</div>
<div class="t" style="left:666.70px;width:200px;text-align:center;top:597.77px;font-size:13.5px;line-height:13.5px;color:#333;font-weight:normal;">0</div>
<div class="t" style="left:732.40px;width:200px;text-align:center;top:597.77px;font-size:13.5px;line-height:13.5px;color:#333;font-weight:normal;">0</div>
<div class="t" style="left:798.10px;width:200px;text-align:center;top:597.77px;font-size:13.5px;line-height:13.5px;color:#333;font-weight:normal;">0</div>
<div class="t" style="left:863.80px;width:200px;text-align:center;top:597.77px;font-size:13.5px;line-height:13.5px;color:#333;font-weight:normal;">0</div>
<div class="t" style="left:929.50px;width:200px;text-align:center;top:597.77px;font-size:13.5px;line-height:13.5px;color:#333;font-weight:normal;">0</div>
<div class="t" style="left:995.20px;width:200px;text-align:center;top:597.77px;font-size:13.5px;line-height:13.5px;color:#333;font-weight:normal;">0</div>
<div class="t" style="left:1060.90px;width:200px;text-align:center;top:597.77px;font-size:13.5px;line-height:13.5px;color:#333;font-weight:normal;">184</div>
<div class="t" style="left:1126.60px;width:200px;text-align:center;top:597.77px;font-size:13.5px;line-height:13.5px;color:#333;font-weight:normal;">168</div>
<div class="t" style="left:1192.30px;width:200px;text-align:center;top:597.77px;font-size:13.5px;line-height:13.5px;color:#333;font-weight:normal;">0</div>
<div class="t" style="left:1258.00px;width:200px;text-align:center;top:597.77px;font-size:13.5px;line-height:13.5px;color:#333;font-weight:normal;">0</div>
<div class="abs" style="left:253px;top:613px;width:1160px;height:1px;background:#cfcfcf"></div>
<div class="t" style="left:264.20px;top:621.36px;font-size:13.4px;line-height:13.4px;color:#1e1e1e;font-weight:normal;-webkit-text-stroke:0.35px #1e1e1e;">Total</div>
<div class="t" style="left:535.30px;width:200px;text-align:center;top:621.77px;font-size:13.5px;line-height:13.5px;color:#333;font-weight:normal;">0</div>
<div class="t" style="left:601.00px;width:200px;text-align:center;top:621.77px;font-size:13.5px;line-height:13.5px;color:#333;font-weight:normal;">0</div>
<div class="t" style="left:666.70px;width:200px;text-align:center;top:621.77px;font-size:13.5px;line-height:13.5px;color:#333;font-weight:normal;">0</div>
<div class="t" style="left:732.40px;width:200px;text-align:center;top:621.77px;font-size:13.5px;line-height:13.5px;color:#333;font-weight:normal;">0</div>
<div class="t" style="left:798.10px;width:200px;text-align:center;top:621.77px;font-size:13.5px;line-height:13.5px;color:#333;font-weight:normal;">0</div>
<div class="t" style="left:863.80px;width:200px;text-align:center;top:621.77px;font-size:13.5px;line-height:13.5px;color:#333;font-weight:normal;">0</div>
<div class="t" style="left:929.50px;width:200px;text-align:center;top:621.77px;font-size:13.5px;line-height:13.5px;color:#333;font-weight:normal;">0</div>
<div class="t" style="left:995.20px;width:200px;text-align:center;top:621.77px;font-size:13.5px;line-height:13.5px;color:#333;font-weight:normal;">32</div>
<div class="t" style="left:1060.90px;width:200px;text-align:center;top:621.77px;font-size:13.5px;line-height:13.5px;color:#e60012;font-weight:normal;">272</div>
<div class="t" style="left:1126.60px;width:200px;text-align:center;top:621.77px;font-size:13.5px;line-height:13.5px;color:#e60012;font-weight:normal;">328</div>
<div class="t" style="left:1192.30px;width:200px;text-align:center;top:621.77px;font-size:13.5px;line-height:13.5px;color:#333;font-weight:normal;">232</div>
<div class="t" style="left:1258.00px;width:200px;text-align:center;top:621.77px;font-size:13.5px;line-height:13.5px;color:#333;font-weight:normal;">0</div>
<div class="t" style="left:252.80px;top:647.02px;font-size:20px;line-height:20px;color:#333a45;font-weight:bold;transform:scaleX(0.958);transform-origin:0 0;">Rachel Kaldor</div>
<div class="t" style="left:263.90px;top:680.35px;font-size:13px;line-height:13px;color:#4a7fc1;font-weight:bold;">Final Testing</div>
<div class="t" style="left:535.30px;width:200px;text-align:center;top:680.72px;font-size:13.5px;line-height:13.5px;color:#333;font-weight:normal;">0</div>
<div class="t" style="left:601.00px;width:200px;text-align:center;top:680.72px;font-size:13.5px;line-height:13.5px;color:#333;font-weight:normal;">0</div>
<div class="t" style="left:666.70px;width:200px;text-align:center;top:680.72px;font-size:13.5px;line-height:13.5px;color:#333;font-weight:normal;">0</div>
<div class="t" style="left:732.40px;width:200px;text-align:center;top:680.72px;font-size:13.5px;line-height:13.5px;color:#333;font-weight:normal;">0</div>
<div class="t" style="left:798.10px;width:200px;text-align:center;top:680.72px;font-size:13.5px;line-height:13.5px;color:#333;font-weight:normal;">0</div>
<div class="t" style="left:863.80px;width:200px;text-align:center;top:680.72px;font-size:13.5px;line-height:13.5px;color:#333;font-weight:normal;">0</div>
<div class="t" style="left:929.50px;width:200px;text-align:center;top:680.72px;font-size:13.5px;line-height:13.5px;color:#333;font-weight:normal;">0</div>
<div class="t" style="left:995.20px;width:200px;text-align:center;top:680.72px;font-size:13.5px;line-height:13.5px;color:#333;font-weight:normal;">0</div>
<div class="t" style="left:1060.90px;width:200px;text-align:center;top:680.72px;font-size:13.5px;line-height:13.5px;color:#333;font-weight:normal;">0</div>
<div class="t" style="left:1126.60px;width:200px;text-align:center;top:680.72px;font-size:13.5px;line-height:13.5px;color:#333;font-weight:normal;">0</div>
<div class="t" style="left:1192.30px;width:200px;text-align:center;top:680.72px;font-size:13.5px;line-height:13.5px;color:#333;font-weight:normal;">64</div>
<div class="t" style="left:1258.00px;width:200px;text-align:center;top:680.72px;font-size:13.5px;line-height:13.5px;color:#333;font-weight:normal;">0</div>
<div class="abs" style="left:253px;top:696px;width:1160px;height:1px;background:#cfcfcf"></div>
<div class="t" style="left:263.90px;top:704.35px;font-size:13px;line-height:13px;color:#4a7fc1;font-weight:bold;">Future of product enhancement</div>
<div class="t" style="left:535.30px;width:200px;text-align:center;top:704.72px;font-size:13.5px;line-height:13.5px;color:#333;font-weight:normal;">0</div>
<div class="t" style="left:601.00px;width:200px;text-align:center;top:704.72px;font-size:13.5px;line-height:13.5px;color:#333;font-weight:normal;">0</div>
<div class="t" style="left:666.70px;width:200px;text-align:center;top:704.72px;font-size:13.5px;line-height:13.5px;color:#333;font-weight:normal;">0</div>
<div class="t" style="left:732.40px;width:200px;text-align:center;top:704.72px;font-size:13.5px;line-height:13.5px;color:#333;font-weight:normal;">0</div>
<div class="t" style="left:798.10px;width:200px;text-align:center;top:704.72px;font-size:13.5px;line-height:13.5px;color:#333;font-weight:normal;">0</div>
<div class="t" style="left:863.80px;width:200px;text-align:center;top:704.72px;font-size:13.5px;line-height:13.5px;color:#333;font-weight:normal;">0</div>
<div class="t" style="left:929.50px;width:200px;text-align:center;top:704.72px;font-size:13.5px;line-height:13.5px;color:#333;font-weight:normal;">0</div>
<div class="t" style="left:995.20px;width:200px;text-align:center;top:704.72px;font-size:13.5px;line-height:13.5px;color:#333;font-weight:normal;">8</div>
<div class="t" style="left:1060.90px;width:200px;text-align:center;top:704.72px;font-size:13.5px;line-height:13.5px;color:#333;font-weight:normal;">0</div>
<div class="t" style="left:1126.60px;width:200px;text-align:center;top:704.72px;font-size:13.5px;line-height:13.5px;color:#333;font-weight:normal;">0</div>
<div class="t" style="left:1192.30px;width:200px;text-align:center;top:704.72px;font-size:13.5px;line-height:13.5px;color:#333;font-weight:normal;">0</div>
<div class="t" style="left:1258.00px;width:200px;text-align:center;top:704.72px;font-size:13.5px;line-height:13.5px;color:#333;font-weight:normal;">0</div>
<div class="abs" style="left:253px;top:720px;width:1160px;height:1px;background:#cfcfcf"></div>
<div class="t" style="left:264.20px;top:728.31px;font-size:13.4px;line-height:13.4px;color:#1e1e1e;font-weight:normal;-webkit-text-stroke:0.35px #1e1e1e;">Total</div>
<div class="t" style="left:535.30px;width:200px;text-align:center;top:728.72px;font-size:13.5px;line-height:13.5px;color:#333;font-weight:normal;">0</div>
<div class="t" style="left:601.00px;width:200px;text-align:center;top:728.72px;font-size:13.5px;line-height:13.5px;color:#333;font-weight:normal;">0</div>
<div class="t" style="left:666.70px;width:200px;text-align:center;top:728.72px;font-size:13.5px;line-height:13.5px;color:#333;font-weight:normal;">0</div>
<div class="t" style="left:732.40px;width:200px;text-align:center;top:728.72px;font-size:13.5px;line-height:13.5px;color:#333;font-weight:normal;">0</div>
<div class="t" style="left:798.10px;width:200px;text-align:center;top:728.72px;font-size:13.5px;line-height:13.5px;color:#333;font-weight:normal;">0</div>
<div class="t" style="left:863.80px;width:200px;text-align:center;top:728.72px;font-size:13.5px;line-height:13.5px;color:#333;font-weight:normal;">0</div>
<div class="t" style="left:929.50px;width:200px;text-align:center;top:728.72px;font-size:13.5px;line-height:13.5px;color:#333;font-weight:normal;">0</div>
<div class="t" style="left:995.20px;width:200px;text-align:center;top:728.72px;font-size:13.5px;line-height:13.5px;color:#333;font-weight:normal;">8</div>
<div class="t" style="left:1060.90px;width:200px;text-align:center;top:728.72px;font-size:13.5px;line-height:13.5px;color:#333;font-weight:normal;">0</div>
<div class="t" style="left:1126.60px;width:200px;text-align:center;top:728.72px;font-size:13.5px;line-height:13.5px;color:#333;font-weight:normal;">0</div>
<div class="t" style="left:1192.30px;width:200px;text-align:center;top:728.72px;font-size:13.5px;line-height:13.5px;color:#333;font-weight:normal;">64</div>
<div class="t" style="left:1258.00px;width:200px;text-align:center;top:728.72px;font-size:13.5px;line-height:13.5px;color:#333;font-weight:normal;">0</div>
<div class="t" style="left:252.80px;top:753.97px;font-size:20px;line-height:20px;color:#333a45;font-weight:bold;transform:scaleX(0.958);transform-origin:0 0;">Joe Brown</div>
<div class="t" style="left:263.90px;top:787.30px;font-size:13px;line-height:13px;color:#4a7fc1;font-weight:bold;">This is my task</div>
<div class="t" style="left:535.30px;width:200px;text-align:center;top:787.67px;font-size:13.5px;line-height:13.5px;color:#333;font-weight:normal;">0</div>
<div class="t" style="left:601.00px;width:200px;text-align:center;top:787.67px;font-size:13.5px;line-height:13.5px;color:#333;font-weight:normal;">0</div>
<div class="t" style="left:666.70px;width:200px;text-align:center;top:787.67px;font-size:13.5px;line-height:13.5px;color:#333;font-weight:normal;">0</div>
<div class="t" style="left:732.40px;width:200px;text-align:center;top:787.67px;font-size:13.5px;line-height:13.5px;color:#333;font-weight:normal;">0</div>
<div class="t" style="left:798.10px;width:200px;text-align:center;top:787.67px;font-size:13.5px;line-height:13.5px;color:#333;font-weight:normal;">0</div>
<div class="t" style="left:863.80px;width:200px;text-align:center;top:787.67px;font-size:13.5px;line-height:13.5px;color:#333;font-weight:normal;">0</div>
<div class="t" style="left:929.50px;width:200px;text-align:center;top:787.67px;font-size:13.5px;line-height:13.5px;color:#333;font-weight:normal;">0</div>
<div class="t" style="left:995.20px;width:200px;text-align:center;top:787.67px;font-size:13.5px;line-height:13.5px;color:#333;font-weight:normal;">0</div>
<div class="t" style="left:1060.90px;width:200px;text-align:center;top:787.67px;font-size:13.5px;line-height:13.5px;color:#333;font-weight:normal;">0</div>
<div class="t" style="left:1126.60px;width:200px;text-align:center;top:787.67px;font-size:13.5px;line-height:13.5px;color:#333;font-weight:normal;">8</div>
<div class="t" style="left:1192.30px;width:200px;text-align:center;top:787.67px;font-size:13.5px;line-height:13.5px;color:#333;font-weight:normal;">0</div>
<div class="t" style="left:1258.00px;width:200px;text-align:center;top:787.67px;font-size:13.5px;line-height:13.5px;color:#333;font-weight:normal;">0</div>
<div class="abs" style="left:253px;top:803px;width:1160px;height:1px;background:#cfcfcf"></div>
<div class="t" style="left:264.20px;top:811.26px;font-size:13.4px;line-height:13.4px;color:#1e1e1e;font-weight:normal;-webkit-text-stroke:0.35px #1e1e1e;">Total</div>
<div class="t" style="left:535.30px;width:200px;text-align:center;top:811.67px;font-size:13.5px;line-height:13.5px;color:#333;font-weight:normal;">0</div>
<div class="t" style="left:601.00px;width:200px;text-align:center;top:811.67px;font-size:13.5px;line-height:13.5px;color:#333;font-weight:normal;">0</div>
<div class="t" style="left:666.70px;width:200px;text-align:center;top:811.67px;font-size:13.5px;line-height:13.5px;color:#333;font-weight:normal;">0</div>
<div class="t" style="left:732.40px;width:200px;text-align:center;top:811.67px;font-size:13.5px;line-height:13.5px;color:#333;font-weight:normal;">0</div>
<div class="t" style="left:798.10px;width:200px;text-align:center;top:811.67px;font-size:13.5px;line-height:13.5px;color:#333;font-weight:normal;">0</div>
<div class="t" style="left:863.80px;width:200px;text-align:center;top:811.67px;font-size:13.5px;line-height:13.5px;color:#333;font-weight:normal;">0</div>
<div class="t" style="left:929.50px;width:200px;text-align:center;top:811.67px;font-size:13.5px;line-height:13.5px;color:#333;font-weight:normal;">0</div>
<div class="t" style="left:995.20px;width:200px;text-align:center;top:811.67px;font-size:13.5px;line-height:13.5px;color:#333;font-weight:normal;">0</div>
<div class="t" style="left:1060.90px;width:200px;text-align:center;top:811.67px;font-size:13.5px;line-height:13.5px;color:#333;font-weight:normal;">0</div>
<div class="t" style="left:1126.60px;width:200px;text-align:center;top:811.67px;font-size:13.5px;line-height:13.5px;color:#333;font-weight:normal;">8</div>
<div class="t" style="left:1192.30px;width:200px;text-align:center;top:811.67px;font-size:13.5px;line-height:13.5px;color:#333;font-weight:normal;">0</div>
<div class="t" style="left:1258.00px;width:200px;text-align:center;top:811.67px;font-size:13.5px;line-height:13.5px;color:#333;font-weight:normal;">0</div>
<div class="t" style="left:252.80px;top:836.92px;font-size:20px;line-height:20px;color:#333a45;font-weight:bold;transform:scaleX(0.958);transform-origin:0 0;">Unassigned</div>
<div class="t" style="left:264.20px;top:870.21px;font-size:13.4px;line-height:13.4px;color:#1e1e1e;font-weight:normal;-webkit-text-stroke:0.35px #1e1e1e;">Total</div>
<div class="t" style="left:535.30px;width:200px;text-align:center;top:870.62px;font-size:13.5px;line-height:13.5px;color:#333;font-weight:normal;">0</div>
<div class="t" style="left:601.00px;width:200px;text-align:center;top:870.62px;font-size:13.5px;line-height:13.5px;color:#333;font-weight:normal;">0</div>
<div class="t" style="left:666.70px;width:200px;text-align:center;top:870.62px;font-size:13.5px;line-height:13.5px;color:#333;font-weight:normal;">0</div>
<div class="t" style="left:732.40px;width:200px;text-align:center;top:870.62px;font-size:13.5px;line-height:13.5px;color:#333;font-weight:normal;">0</div>
<div class="t" style="left:798.10px;width:200px;text-align:center;top:870.62px;font-size:13.5px;line-height:13.5px;color:#333;font-weight:normal;">0</div>
<div class="t" style="left:863.80px;width:200px;text-align:center;top:870.62px;font-size:13.5px;line-height:13.5px;color:#333;font-weight:normal;">0</div>
<div class="t" style="left:929.50px;width:200px;text-align:center;top:870.62px;font-size:13.5px;line-height:13.5px;color:#333;font-weight:normal;">0</div>
<div class="t" style="left:995.20px;width:200px;text-align:center;top:870.62px;font-size:13.5px;line-height:13.5px;color:#333;font-weight:normal;">0</div>
<div class="t" style="left:1060.90px;width:200px;text-align:center;top:870.62px;font-size:13.5px;line-height:13.5px;color:#333;font-weight:normal;">0</div>
<div class="t" style="left:1126.60px;width:200px;text-align:center;top:870.62px;font-size:13.5px;line-height:13.5px;color:#333;font-weight:normal;">0</div>
<div class="t" style="left:1192.30px;width:200px;text-align:center;top:870.62px;font-size:13.5px;line-height:13.5px;color:#333;font-weight:normal;">0</div>
<div class="t" style="left:1258.00px;width:200px;text-align:center;top:870.62px;font-size:13.5px;line-height:13.5px;color:#333;font-weight:normal;">0</div>
<div class="abs" style="left:1464px;top:920px;width:179px;height:30px;border:1px solid #cfcfcf;background:linear-gradient(#fff,#f0f0f0)"></div>
<div class="t" style="left:1474.50px;top:927.64px;font-size:12px;line-height:12px;color:#333;font-weight:normal;">Chat (Nobody is online)</div>
</body></html>
